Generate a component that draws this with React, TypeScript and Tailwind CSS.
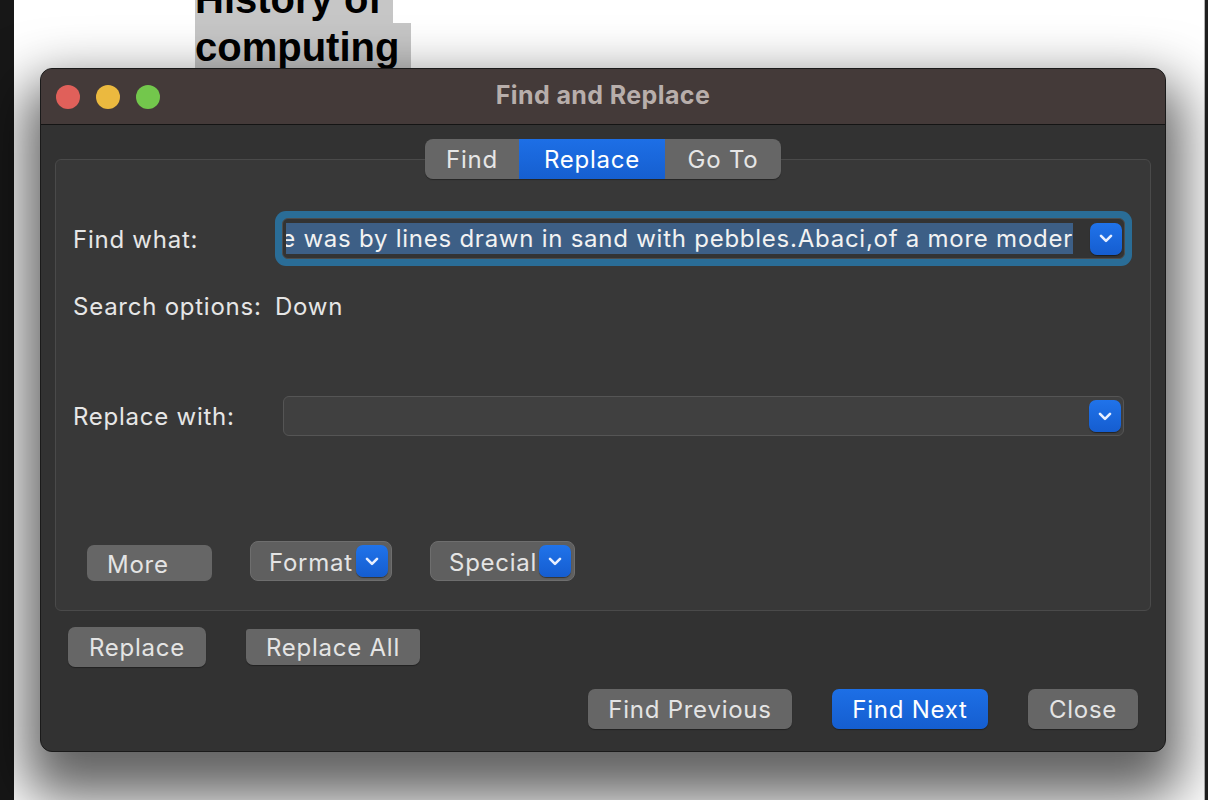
import React from 'react';

function Chevron() {
  return (
    <svg width="14" height="9" viewBox="0 0 14 9" fill="none">
      <path d="M2 1.8 L7 6.8 L12 1.8" stroke="#e8efff" strokeWidth="2.6" strokeLinecap="round" strokeLinejoin="round" />
    </svg>
  );
}

function BlueBox() {
  return (
    <span className="flex h-8 w-8 shrink-0 items-center justify-center rounded-[7px] bg-linear-to-b from-[#2073ea] to-[#155dd0] shadow-[0_1px_1px_rgba(0,0,0,0.45)]">
      <Chevron />
    </span>
  );
}

function GrayButton({ label, className }: { label: string; className: string }) {
  return (
    <div className={'flex items-center justify-center rounded-[7px] bg-[#666666] pt-[2px] text-[24px] text-[#e4e4e4] shadow-[0_1px_1px_rgba(0,0,0,0.35)] ' + className}>
      {label}
    </div>
  );
}

function DropButton({ label, className }: { label: string; className: string }) {
  return (
    <div className={'flex h-[40px] items-center justify-between rounded-[8px] border border-[#6e6e6e] bg-[#5f5f5f] pl-[18px] pr-[3px] text-[24px] text-[#e4e4e4] ' + className}>
      <span className="pt-[3px]">{label}</span>
      <BlueBox />
    </div>
  );
}

export default function App() {
  return (
    <div className="relative flex h-[800px] w-[1208px] overflow-hidden bg-white">
      {/* left dark edge */}
      <div className="w-[14px] bg-[#171717]" />

      {/* document page behind the dialog */}
      <div className="flex-1 bg-white">
        <div className="-mt-[25px] pl-[181px] font-['Liberation_Sans',Arial,sans-serif] text-[40px] font-bold leading-[48px] text-black">
          <div>
            <span className="inline-block bg-[#c6c6c6]">History of&nbsp;</span>
          </div>
          <div>
            <span className="inline-block bg-[#c6c6c6]">computing&nbsp;</span>
          </div>
        </div>
      </div>

      {/* right edge */}
      <div className="w-[1px] bg-[#b5b5b5]" />
      <div className="w-[3px] bg-[#1f1f1f]" />

      {/* Find and Replace dialog */}
      <div className="absolute left-[40px] top-[68px] flex h-[684px] w-[1126px] flex-col overflow-hidden rounded-[12px] border border-[#1a1a1a] bg-[#323232] font-['Inter','Noto_Sans',sans-serif] tracking-[0.75px] shadow-[0_30px_55px_16px_rgba(0,0,0,0.62)]">
        {/* title bar */}
        <div className="grid h-[56px] grid-cols-[1fr_auto_1fr] items-center border-b border-[#141414] bg-[#443a39]">
          <div className="flex items-center gap-[16px] pl-[15px]">
            <span className="h-[24px] w-[24px] rounded-full bg-[#e0605a]" />
            <span className="h-[24px] w-[24px] rounded-full bg-[#ebb93f]" />
            <span className="h-[24px] w-[24px] rounded-full bg-[#73c74c]" />
          </div>
          <div className="-mt-[2px] text-[25px] font-bold tracking-[0.4px] text-[#b8aeab]">Find and Replace</div>
          <div />
        </div>

        {/* body */}
        <div className="flex flex-1 flex-col px-[14px] pt-[14px]">
          {/* tabs */}
          <div className="relative z-10 flex justify-center">
            <div className="flex h-[40px] overflow-hidden rounded-[8px] text-[24px] text-[#e6e6e6] shadow-[0_1px_1px_rgba(0,0,0,0.35)]">
              <div className="flex w-[94px] items-center justify-center bg-[#666666] pt-[2px]">Find</div>
              <div className="flex w-[146px] items-center justify-center bg-linear-to-b from-[#1d6fe6] to-[#165fd0] pt-[2px] text-white">Replace</div>
              <div className="flex w-[116px] items-center justify-center bg-[#666666] pt-[2px]">Go To</div>
            </div>
          </div>

          {/* group box */}
          <div className="-mt-[20px] flex h-[452px] flex-col rounded-[6px] border border-[#4a4a4a] bg-[#383838] pt-[51px] text-[24px] text-[#e6e6e6]">
            {/* find what */}
            <div className="flex items-center pl-[17px] pr-[18px]">
              <div className="w-[202px] pt-[3px]">Find what:</div>
              <div className="flex-1 rounded-[11px] bg-[#2a6d97] p-[7px]">
                <div className="flex h-[41px] items-center rounded-[6px] border border-[#4c4c4c] bg-[#333333] pl-[3px] pr-[2px]">
                  <div className="flex h-[31px] w-[787px] items-center justify-end overflow-hidden bg-[#3d5f86] whitespace-nowrap text-[#f2f2f2]">
                    e was by lines drawn in sand with pebbles.Abaci,of a more moder
                  </div>
                  <div className="flex-1" />
                  <BlueBox />
                </div>
              </div>
            </div>

            {/* search options */}
            <div className="mt-[25px] flex h-[30px] items-center pl-[17px] pt-[2px]">
              <div className="w-[202px]">Search options:</div>
              <div>Down</div>
            </div>

            {/* replace with */}
            <div className="mt-[68px] flex items-center pl-[17px] pr-[18px]">
              <div className="w-[202px] pt-[2px]">Replace with:</div>
              <div className="flex-1 px-[8px] py-[7px]">
                <div className="flex h-[40px] items-center justify-end rounded-[6px] border border-[#555555] bg-[#404040] pr-[2px]">
                  <BlueBox />
                </div>
              </div>
            </div>

            {/* more / format / special */}
            <div className="mt-[98px] flex items-end gap-[38px] pl-[31px]">
              <div className="flex h-[36px] w-[125px] items-center rounded-[7px] bg-[#666666] pl-[20px] pt-[3px] text-[#e4e4e4]">More</div>
              <DropButton label="Format" className="w-[142px]" />
              <DropButton label="Special" className="w-[145px]" />
            </div>
          </div>

          {/* replace buttons */}
          <div className="mt-[16px] flex items-center gap-[40px] pl-[13px]">
            <GrayButton label="Replace" className="h-[40px] w-[138px]" />
            <GrayButton label="Replace All" className="h-[36px] w-[174px] rounded-t-[3px]" />
          </div>

          {/* bottom buttons */}
          <div className="mt-[22px] flex justify-end gap-[40px] pr-[13px]">
            <GrayButton label="Find Previous" className="h-[40px] w-[204px]" />
            <div className="flex h-[40px] w-[156px] items-center justify-center rounded-[7px] bg-linear-to-b from-[#1d6fe6] to-[#155ed0] pt-[2px] text-[24px] text-white shadow-[0_1px_1px_rgba(0,0,0,0.35)]">
              Find Next
            </div>
            <GrayButton label="Close" className="h-[40px] w-[110px]" />
          </div>
        </div>
      </div>
    </div>
  );
}
